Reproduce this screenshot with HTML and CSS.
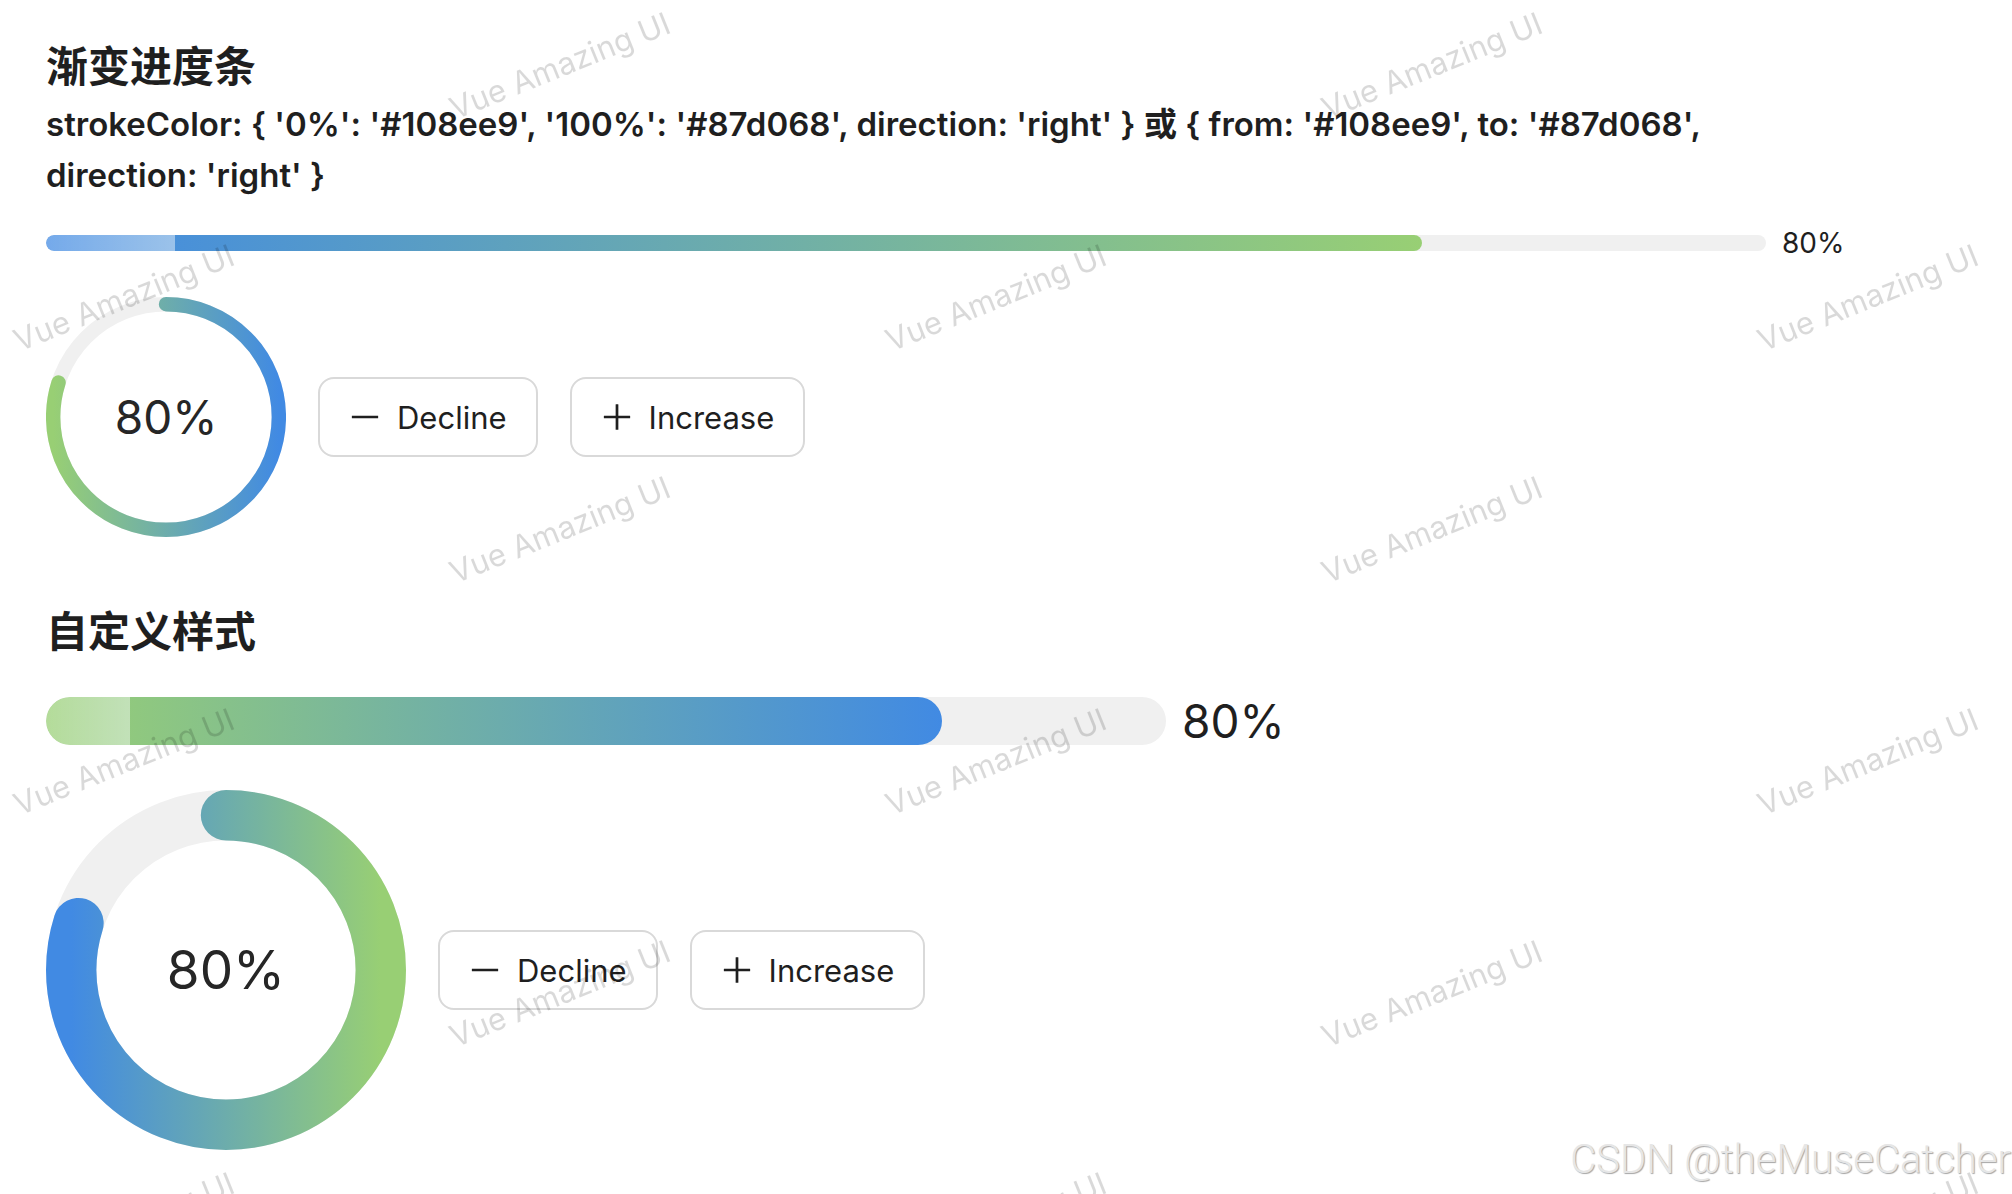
FILE: index.html
```html
<!DOCTYPE html>
<html lang="zh-CN">
<head>
<meta charset="utf-8">
<meta name="viewport" content="width=device-width, initial-scale=1">
<title>Progress</title>
<link rel="stylesheet" href="styles.css">
</head>
<body>
<main class="page">
  <section class="demo">
    <h2 class="title">渐变进度条</h2>
    <h3 class="subtitle">strokeColor: { '0%': '#108ee9', '100%': '#87d068', direction: 'right' } 或 { from: '#108ee9', to: '#87d068', direction: 'right' }</h3>
    <div class="line" role="progressbar" aria-valuenow="80" aria-valuemin="0" aria-valuemax="100" aria-label="渐变进度条">
      <div class="track"><div class="fill" style="width: 80%"></div></div>
      <span class="value">80%</span>
    </div>
    <div class="row">
      <div class="circle">
        <svg class="ring" viewBox="0 0 100 100" aria-hidden="true">
          <defs>
            <linearGradient id="ring-a" x1="100%" y1="0%" x2="0%" y2="0%">
              <stop offset="0%" stop-color="#418ae3"/><stop offset="100%" stop-color="#98cf74"/>
            </linearGradient>
          </defs>
          <path class="ring-rail" stroke-width="6" d="M50 3a47 47 0 1 1 0 94a47 47 0 1 1 0-94"/>
          <path class="ring-bar" stroke="url(#ring-a)" stroke-width="6" pathLength="100" stroke-dasharray="80 100" d="M50 3a47 47 0 1 1 0 94a47 47 0 1 1 0-94"/>
        </svg>
        <span class="circle-value">80%</span>
      </div>
      <button class="btn" type="button"><svg class="icon" viewBox="64 64 896 896" aria-hidden="true"><path d="M872 474H152c-4.4 0-8 3.6-8 8v60c0 4.4 3.6 8 8 8h720c4.4 0 8-3.6 8-8v-60c0-4.4-3.6-8-8-8z"/></svg>Decline</button>
      <button class="btn" type="button"><svg class="icon" viewBox="64 64 896 896" aria-hidden="true"><path d="M482 152h60q8 0 8 8v704q0 8-8 8h-60q-8 0-8-8V160q0-8 8-8z"/><path d="M152 474h720q8 0 8 8v60q0 8-8 8H152q-8 0-8-8v-60q0-8 8-8z"/></svg>Increase</button>
    </div>
  </section>

  <section class="demo">
    <h2 class="title">自定义样式</h2>
    <div class="line line-large" role="progressbar" aria-valuenow="80" aria-valuemin="0" aria-valuemax="100" aria-label="自定义样式">
      <div class="track"><div class="fill" style="width: 80%"></div></div>
      <span class="value">80%</span>
    </div>
    <div class="row">
      <div class="circle circle-large">
        <svg class="ring" viewBox="0 0 100 100" aria-hidden="true">
          <defs>
            <linearGradient id="ring-b" x1="0%" y1="0%" x2="100%" y2="0%">
              <stop offset="0%" stop-color="#418ae3"/><stop offset="100%" stop-color="#98cf74"/>
            </linearGradient>
          </defs>
          <path class="ring-rail" stroke-width="14" d="M50 7a43 43 0 1 1 0 86a43 43 0 1 1 0-86"/>
          <path class="ring-bar" stroke="url(#ring-b)" stroke-width="14" pathLength="100" stroke-dasharray="80 100" d="M50 7a43 43 0 1 1 0 86a43 43 0 1 1 0-86"/>
        </svg>
        <span class="circle-value">80%</span>
      </div>
      <button class="btn" type="button"><svg class="icon" viewBox="64 64 896 896" aria-hidden="true"><path d="M872 474H152c-4.4 0-8 3.6-8 8v60c0 4.4 3.6 8 8 8h720c4.4 0 8-3.6 8-8v-60c0-4.4-3.6-8-8-8z"/></svg>Decline</button>
      <button class="btn" type="button"><svg class="icon" viewBox="64 64 896 896" aria-hidden="true"><path d="M482 152h60q8 0 8 8v704q0 8-8 8h-60q-8 0-8-8V160q0-8 8-8z"/><path d="M152 474h720q8 0 8 8v60q0 8-8 8H152q-8 0-8-8v-60q0-8 8-8z"/></svg>Increase</button>
    </div>
  </section>
</main>

<svg class="watermark" aria-hidden="true">
  <defs>
    <pattern id="mark" width="872" height="464" patternUnits="userSpaceOnUse">
      <text class="mark-text" text-anchor="middle" transform="translate(564 76) rotate(-22)">Vue Amazing UI</text>
      <text class="mark-text" text-anchor="middle" transform="translate(128 308) rotate(-22)">Vue Amazing UI</text>
    </pattern>
  </defs>
  <rect width="100%" height="100%" fill="url(#mark)"/>
</svg>
<div class="credit">CSDN @theMuseCatcher</div>
</body>
</html>
```
FILE: styles.css
```css
* {
  box-sizing: border-box;
}

body {
  margin: 0;
  min-height: 100vh;
  position: relative;
  overflow: hidden;
  background: #fff;
  color: #1f1f1f;
  font-family: Inter, "Noto Sans CJK SC", sans-serif;
}

.page {
  display: flex;
  flex-direction: column;
  gap: 62px;
  padding: 34px 46px 44px;
}

.title {
  margin: 0;
  font-size: 42px;
  line-height: 65px;
  font-weight: 700;
}

.subtitle {
  margin: 0;
  max-width: 1800px;
  font-size: 33px;
  line-height: 51px;
  font-weight: 600;
}

.line {
  display: flex;
  align-items: center;
  gap: 16px;
  max-width: 1800px;
  margin: 20px 0 32px;
  font-size: 28px;
  line-height: 44px;
}

.track {
  flex: 1;
  height: 16px;
  border-radius: 24px;
  background: #f0f0f0;
  overflow: hidden;
}

.fill {
  position: relative;
  height: 100%;
  border-radius: 24px;
  overflow: hidden;
  background: linear-gradient(to right, #418ae3, #98cf74);
}

.fill::after {
  content: "";
  position: absolute;
  inset: 0 auto 0 0;
  width: 9.375%;
  background: linear-gradient(to right, rgba(255, 255, 255, 0.27), rgba(255, 255, 255, 0.45));
}

.value {
  width: 64px;
}

.line-large {
  max-width: 1240px;
  font-size: 46px;
  line-height: 74px;
}

.line-large .track {
  height: 48px;
}

.line-large .fill {
  background: linear-gradient(to right, #98cf74, #418ae3);
}

.line-large .value {
  width: 104px;
}

.row {
  display: flex;
  align-items: center;
  gap: 32px;
}

.circle {
  display: grid;
  place-items: center;
  width: 240px;
  height: 240px;
  font-size: 46px;
  color: #262626;
}

.circle-large {
  width: 360px;
  height: 360px;
  font-size: 53px;
}

.ring,
.circle-value {
  grid-area: 1 / 1;
}

.ring {
  width: 100%;
  height: 100%;
  fill: none;
}

.ring-rail {
  stroke: #f0f0f0;
}

.ring-bar {
  stroke-linecap: round;
}

.btn {
  display: flex;
  align-items: center;
  gap: 16px;
  height: 80px;
  padding: 0 29px;
  border: 2px solid #d9d9d9;
  border-radius: 16px;
  background: transparent;
  color: inherit;
  font-family: inherit;
  font-size: 31px;
  font-weight: 400;
}

.icon {
  width: 32px;
  height: 32px;
  fill: currentColor;
}

.watermark {
  position: absolute;
  inset: 0;
  width: 100%;
  height: 100%;
  pointer-events: none;
}

.mark-text {
  font-size: 31px;
  fill: rgba(0, 0, 0, 0.15);
}

.credit {
  position: absolute;
  right: 1px;
  bottom: 8px;
  color: #e6e6e6;
  font-family: Roboto, sans-serif;
  font-size: 40px;
  font-weight: 300;
  line-height: 52px;
  text-shadow: 1px 1px 1px #a6a6a6;
}
```
